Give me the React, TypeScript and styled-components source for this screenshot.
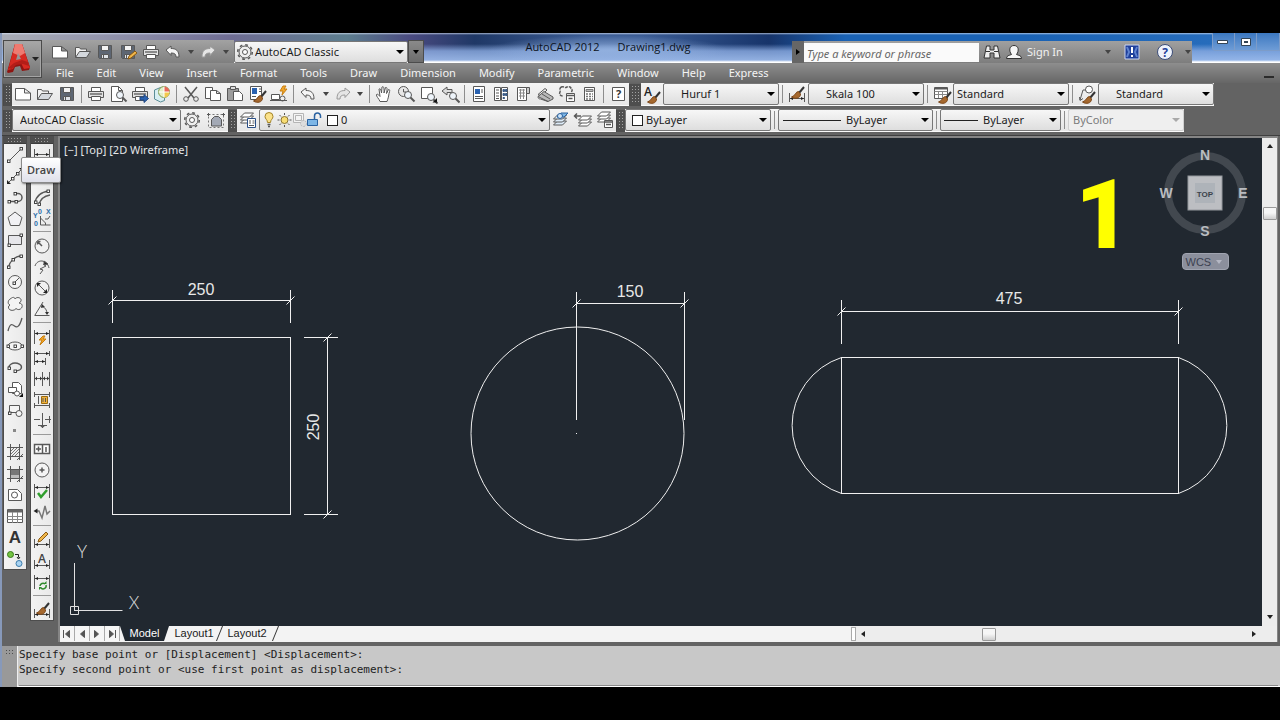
import React from "react";
import styled, { createGlobalStyle, css } from "styled-components";

const UI = `"Noto Sans", "Open Sans", sans-serif`;
const UI_ALT = `"Open Sans", "Noto Sans", sans-serif`;
const ARIAL = `"Liberation Sans", Arial, sans-serif`;

const GlobalStyle = createGlobalStyle`
  * { box-sizing: border-box; }
  body { margin: 0; background: #000; font-family: ${UI}; font-size: 11px; line-height: 14px; color: #1c1c1c; }
  button, input, select { font: inherit; color: inherit; }
`;

const Screen = styled.div`
  min-height: 100vh;
  padding: 33px 0;
  display: flex;
  flex-direction: column;
  background: #000;
`;

const AppWindow = styled.div`
  flex: 1;
  display: flex;
  flex-direction: column;
  border-left: 2px solid #8799ba;
  background: #636363;
`;

/* ---------- title and menu ---------- */

const Header = styled.header`
  display: grid;
  grid-template-columns: 40px 1fr;
  grid-template-rows: 30px 20px;
  background:
    linear-gradient(180deg, rgba(220, 232, 250, 0.7) 0, rgba(220, 232, 250, 0) 2px),
    radial-gradient(ellipse 120px 15px at 606px 17px, rgba(150, 180, 225, 0.85), rgba(150, 180, 225, 0) 100%),
    linear-gradient(180deg, rgba(110, 150, 215, 0) 0, rgba(110, 150, 215, 0) 22%, rgba(140, 172, 226, 0.8) 36%, rgba(158, 188, 236, 0.9) 54%, #fff 58%),
    linear-gradient(90deg, #a9adb6 0, #9294ac 8%, #6e6c93 18%, #5c7d8e 27%, #4a4a80 32%, #1f3866 37%, #3b5c94 46%, #3b5c94 50%, #17346a 60%, #1a62b4 66%, #1a62b4 80%, #2b70be 100%);
`;

const AppButton = styled.button`
  grid-column: 1;
  grid-row: 1 / 3;
  z-index: 1;
  margin: 7px 0 5px 1px;
  padding: 0;
  border: 1px solid #4a4a4a;
  background: linear-gradient(#a8a8a8, #747474);
  box-shadow: inset 0 0 0 1px #a5a5a5;
`;

const TitleRow = styled.div`
  grid-column: 2;
  grid-row: 1;
  display: flex;
  align-items: flex-end;
`;

const QuickAccess = styled.div`
  width: 192px;
  height: 23px;
  padding: 0 2px 0 7px;
  display: flex;
  align-items: center;
  justify-content: space-between;
  background: linear-gradient(#a2a2a2, #7f7f7f);
`;

const MoreButton = styled.button`
  width: 16px;
  height: 23px;
  padding: 0;
  border: 1px solid #4c4c4c;
  background: linear-gradient(#8a8a8a, #6c6c6c);
  display: grid;
  place-items: center;
`;

const Title = styled.h1`
  flex: 1;
  height: 23px;
  margin: 0;
  display: flex;
  justify-content: center;
  gap: 18px;
  font-family: ${UI_ALT};
  font-size: 11px;
  font-weight: 400;
  line-height: 14px;
  color: #0c1220;
`;

const InfoCenter = styled.div`
  width: 400px;
  height: 22px;
  display: flex;
  align-items: center;
  background: linear-gradient(#a0a0a0, #7d7d7d);
  color: #f2f2f2;
`;

const InfoArrow = styled.button`
  width: 12px;
  height: 22px;
  padding: 0;
  border: 0;
  background: #666;
  display: grid;
  place-items: center;
`;

const Search = styled.input`
  width: 175px;
  height: 19px;
  padding: 2px 3px 0;
  border: 0;
  background: #fafafa;
  color: #666;
  font-style: italic;
  &::placeholder { color: #666; opacity: 1; }
`;

const SignIn = styled.button`
  flex: 1;
  height: 20px;
  padding: 0 6px 0 3px;
  border: 0;
  background: none;
  display: flex;
  align-items: center;
  justify-content: space-between;
`;

const WindowButtons = styled.div`
  width: 88px;
  height: 30px;
  padding-left: 20px;
  display: flex;
  align-items: flex-start;
`;

const WindowButton = styled.button`
  width: 28px;
  height: 18px;
  padding: 0;
  border: 1px solid #7d9cc8;
  border-top: 0;
  border-left-width: 0;
  background: linear-gradient(#3c78c0, #6e9cd6);
  display: grid;
  place-items: center;
  &:first-child { border-left-width: 1px; border-bottom-left-radius: 4px; }
`;

const MenuBar = styled.nav`
  grid-column: 1 / 3;
  grid-row: 2;
  padding: 0 6px 0 54px;
  display: flex;
  align-items: center;
  gap: 23px;
  background: linear-gradient(#8e8e8e, #666);
`;

const MenuItem = styled.button`
  padding: 0;
  border: 0;
  background: none;
  color: #f4f4f4;
  line-height: 18px;
`;

const MdiMinimize = styled.button`
  width: 10px;
  height: 10px;
  margin-left: auto;
  padding: 0;
  border: 0;
  border-bottom: 2px solid #2b2b2b;
  background: none;
`;

/* ---------- toolbars ---------- */

const ToolbarRow = styled.div`
  padding: 0 0 3px 1px;
  display: flex;
  align-items: center;
`;

const Grip = styled.span<{ $w: number }>`
  flex: none;
  width: ${(p) => p.$w}px;
  height: 22px;
  border-left: 1px solid #4a4a4a;
  background:
    radial-gradient(#a2a2a2 1px, transparent 1px) 1px 1px / 3px 3px,
    #4e4e4e;
  background-clip: content-box, border-box;
  padding: 2px 2px;
`;

const Panel = styled.div<{ $w?: number }>`
  ${(p) => p.$w && css`width: ${p.$w}px;`}
  height: 23px;
  display: flex;
  align-items: center;
  justify-content: space-between;
  background: linear-gradient(#f4f4f4, #e6e6e6);
  border-bottom: 1px solid #fafafa;
`;

const ToolButton = styled.button<{ $w?: number }>`
  flex: none;
  width: ${(p) => p.$w ?? 22}px;
  height: 21px;
  padding: 0;
  border: 0;
  background: none;
  display: grid;
  place-items: center;
`;

const Divider = styled.span`
  flex: none;
  width: 1px;
  height: 18px;
  margin: 0 3px;
  background: #8d8d8d;
`;

const ComboBox = styled.label<{ $w: number; $pad: number; $off?: boolean }>`
  position: relative;
  flex: none;
  width: ${(p) => p.$w}px;
  height: 22px;
  padding-left: ${(p) => p.$pad}px;
  display: flex;
  align-items: center;
  border: 1px solid ${(p) => (p.$off ? "#d0d0d0" : "#777")};
  border-radius: 2px;
  background: ${(p) => (p.$off ? "#efefef" : "linear-gradient(#f7f7f7, #dedede)")};
  color: ${(p) => (p.$off ? "#7b7b7b" : "#1c1c1c")};
  &::after {
    content: "";
    position: absolute;
    right: 3px;
    top: 8px;
    border: 4px solid transparent;
    border-top-color: ${(p) => (p.$off ? "#a9a9a9" : "#000")};
    border-bottom-width: 0;
    pointer-events: none;
  }
`;

const Select = styled.select`
  flex: 1;
  min-width: 0;
  height: 100%;
  padding: 0;
  border: 0;
  outline: 0;
  appearance: none;
  background: none;
  color: inherit;
  opacity: 1;
`;

const Swatch = styled.span`
  width: 11px;
  height: 11px;
  margin: 0 3px 0 2px;
  border: 1px solid #222;
  background: #fff;
`;

const LineSample = styled.span<{ $w: number }>`
  width: ${(p) => p.$w}px;
  height: 1px;
  margin-right: 5px;
  background: #222;
`;

/* ---------- work area ---------- */

const WorkArea = styled.div`
  flex: 1;
  display: flex;
  align-items: stretch;
  padding-left: 1px;
  border-top: 1px solid #3f3f3f;
`;

const SideBar = styled.div<{ $gap: number; $h: number }>`
  position: relative;
  flex: none;
  align-self: flex-start;
  width: 24px;
  min-height: ${(p) => p.$h}px;
  margin-right: ${(p) => p.$gap}px;
  display: flex;
  flex-direction: column;
  align-items: center;
  justify-content: space-between;
  border: 1px solid #4d4d4d;
  border-top: 0;
  background: linear-gradient(90deg, #f3f3f3, #e9e9e9);
`;

const SideGrip = styled.span`
  width: 100%;
  height: 8px;
  border-bottom: 1px solid #3c3c3c;
  background:
    radial-gradient(#a0a0a0 1px, transparent 1px) 3px 1px / 3px 3px,
    #4e4e4e;
  background-clip: content-box, border-box;
  padding: 1px 3px;
`;

const SideDivider = styled.span`
  width: 18px;
  height: 1px;
  margin: 3px 0;
  background: #9a9a9a;
`;

const Tooltip = styled.span`
  position: absolute;
  left: 17px;
  top: 21px;
  z-index: 3;
  padding: 5px 5px;
  border: 1px solid #8a8a8a;
  border-radius: 2px;
  background: linear-gradient(#fff, #dfe0ea);
  box-shadow: 1px 1px 2px rgba(0, 0, 0, 0.5);
  color: #444;
  font-family: ${UI_ALT};
  font-weight: 600;
`;

const DocumentPane = styled.main`
  flex: 1;
  min-width: 0;
  display: flex;
  flex-direction: column;
  border: 2px solid #858585;
  border-right-width: 1px;
  border-bottom: 0;
  margin-right: 2px;
`;

const Viewport = styled.div`
  flex: 1;
  display: flex;
`;

const Canvas = styled.section`
  position: relative;
  flex: 1;
  min-width: 0;
  min-height: 480px;
  overflow: hidden;
  background: #212830;
`;

const Drawing = styled.svg`
  position: absolute;
  inset: 0;
  width: 100%;
  height: 100%;
  fill: none;
  stroke: #f0f0f0;
  text { fill: #e8e8e8; stroke: none; font: 16px ${ARIAL}; }
`;

const BigNumber = styled.text`
  && {
    font: 900 96px Roboto, ${ARIAL};
    fill: #ffff00;
  }
`;

const ViewLabels = styled.div`
  position: absolute;
  left: 4px;
  top: 5px;
  color: #e4e6e8;
`;

const ViewCube = styled.div`
  position: absolute;
  top: 8px;
  right: 11px;
  display: flex;
  flex-direction: column;
  align-items: center;
  gap: 13px;
`;

const WcsButton = styled.button`
  width: 47px;
  height: 17px;
  padding: 0 5px 0 3px;
  border: 1px solid #a0a4b0;
  border-radius: 4px;
  background: #8b8f9c;
  color: #3b4150;
  font-family: ${ARIAL};
  display: flex;
  align-items: center;
  justify-content: space-between;
  line-height: 14px;
`;

const UcsIcon = styled.svg`
  position: absolute;
  left: 8px;
  bottom: 8px;
  fill: none;
  stroke: #e0e0e0;
`;

const VScroll = styled.div`
  flex: none;
  width: 15px;
  padding: 1px 1px 2px;
  display: flex;
  flex-direction: column;
  align-items: center;
  background: #ececec;
`;

const HScroll = styled.div`
  width: 35%;
  padding-right: 16px;
  display: flex;
  align-items: center;
  background: #ededed;
`;

const ScrollArrow = styled.button`
  flex: none;
  width: 14px;
  height: 14px;
  padding: 0;
  border: 0;
  background: none;
  display: grid;
  place-items: center;
`;

const Thumb = styled.span`
  flex: none;
  width: 14px;
  height: 13px;
  border: 1px solid #999;
  border-radius: 1px;
  background: linear-gradient(#f6f6f6 45%, #cfcfcf);
`;

const Spacer = styled.span<{ $grow: number }>`
  flex: ${(p) => p.$grow} 1 0;
`;

const SplitHandle = styled.span`
  width: 5px;
  height: 14px;
  border: 1px solid #aaa;
  background: #fff;
`;

const TabStrip = styled.div`
  height: 16px;
  display: flex;
  justify-content: space-between;
  background: #f3f3f3;
`;

const TabGroup = styled.div`
  display: flex;
  font-family: ${ARIAL};
`;

const TabNav = styled.button`
  width: 15px;
  height: 15px;
  padding: 0;
  border: 0;
  border-right: 1px solid #aaa;
  background: #f6f6f6;
  display: grid;
  place-items: center;
`;

const Tab = styled.button<{ $w: number; $on?: boolean }>`
  position: relative;
  width: ${(p) => p.$w}px;
  height: 15px;
  padding: 0;
  border: 0;
  background: ${(p) => (p.$on ? "#212830" : "#f3f3f3")};
  clip-path: ${(p) => (p.$on ? "polygon(0 0, 100% 0, calc(100% - 5px) 100%, 5px 100%)" : "none")};
  color: ${(p) => (p.$on ? "#fff" : "#1a1a1a")};
  line-height: 15px;
  &::after {
    content: "";
    display: ${(p) => (p.$on ? "none" : "block")};
    position: absolute;
    z-index: 1;
    right: -1px;
    top: 0;
    height: 15px;
    border-right: 1px solid #333;
    transform: skewX(-22deg);
  }
`;

/* ---------- command line ---------- */

const CommandPane = styled.footer`
  margin-top: 4px;
  padding-left: 1px;
  display: flex;
  background: #999;
`;

const CommandGrip = styled.span`
  flex: none;
  width: 14px;
  height: 8px;
  padding: 3px 2px 0;
  background: radial-gradient(#4d4d4d 1px, transparent 1px) 0 0 / 3px 3px content-box;
`;

const CommandText = styled.div`
  flex: 1;
  padding: 1px 2px 0 1px;
  border-left: 1px solid #eee;
  border-bottom: 1px solid #fff;
  background: #c8c8c8;
  font: 11px/15px "DejaVu Sans Mono", monospace;
  color: #222;
`;

const CommandInput = styled.input`
  display: block;
  width: 100%;
  height: 9px;
  padding: 0;
  border: 0;
  border-bottom: 1px solid #8a8a8a;
  outline: 0;
  background: none;
`;

/* ---------- icon artwork (20 x 20 grid) ---------- */

const page = <path d="M2.500 4.500h9l6 4.500v7h-15zM11.500 4.500v4.500h6" fill="#fff" />;
const floppy = (
  <>
    <path d="M3.500 3.500h13v13h-12l-1-1z" fill="#5d6673" />
    <path d="M6.500 3.500h7v5h-7z" fill="#f3f3f3" />
    <path d="M6.500 12.500h7v4h-7z" fill="#dfe3e8" />
    <path d="M8.500 13v3" />
  </>
);
const folder = (
  <>
    <path d="M2.500 15.500v-10h4l1 1.500h6v3" fill="#f1f1f1" />
    <path d="M2.500 15.500l4-6h11l-4 6z" fill="#d5d9de" />
  </>
);
const printer = (
  <>
    <path d="M5.500 8V3.500h9V8" fill="#fff" />
    <path d="M2.500 7.500h15v6h-15z" fill="#e2e2e2" />
    <path d="M5.500 12.500h9v4h-9z" fill="#fff" />
    <path d="M4 10h12" stroke="#333" />
  </>
);
const lens = (
  <>
    <circle cx="12" cy="11" r="3.500" fill="#eef4fa" />
    <path d="M14.500 13.500l4 4" strokeWidth="2" />
  </>
);
const undo = <path d="M3 8l5-4v2.500c5 0 8 2 8 8.500h-3c0-3-1.500-4-5-4v2.500z" fill="#f5f5f5" />;
const redo = <path d="M17 8l-5-4v2.500c-5 0-8 2-8 8.500h3c0-3 1.500-4 5-4v2.500z" fill="#e5e5e5" stroke="#999" />;
const brush = (
  <>
    <path d="M18 4l-5 6" stroke="#333" strokeWidth="2" />
    <path d="M12.500 8.500c-3 0-3 4.500-7 5.500 3.500 2.500 9 1.500 9-3z" fill="#a5682e" stroke="#7b4516" />
  </>
);
const gear = (
  <>
    <circle cx="10" cy="10" r="6" fill="#eee" />
    <circle cx="10" cy="10" r="7.300" strokeDasharray="2.800 2.930" strokeWidth="1.500" />
    <circle cx="10" cy="10" r="2.500" fill="#fff" />
  </>
);
const layers = (y: number, fill = "#fff") => (
  <>
    {[y + 6, y + 3, y].map((t) => (
      <path key={t} d={`M2.500 ${t + 4}l4-4h9l-4 4z`} fill={fill} />
    ))}
  </>
);
const dimLine = (
  <>
    <path d="M2.500 4v12M17.500 4v12M3 9.500h14" />
    <path d="M3 9.500l3-1.500v3zM17 9.500l-3-1.500v3z" fill="#222" stroke="none" />
  </>
);
const dimTop = (
  <>
    <path d="M2.500 3v14M17.500 3v14M3 6.500h14" />
    <path d="M3 6.500l3-1.500v3zM17 6.500l-3-1.500v3z" fill="#222" stroke="none" />
  </>
);
const dimLow = (
  <>
    <path d="M2.500 9v9M17.500 9v9M3 14.500h14" />
    <path d="M3 14.500l3-1.500v3zM17 14.500l-3-1.500v3z" fill="#222" stroke="none" />
  </>
);
const node = (x: number, y: number) => <rect key={`${x}-${y}`} x={x - 1} y={y - 1} width="2.500" height="2.500" fill="#fff" stroke="#333" strokeWidth="0.900" />;
const frame = <path d="M5.500 2v16M14.500 2v16M2 5.500h16M2 14.500h16" />;

const art: Record<string, React.ReactNode> = {
  page,
  floppy,
  folder,
  printer,
  undo,
  redo,
  gear,
  saveAs: (<>{floppy}<path d="M10 17l1-3 6-5 2 2-6 5z" fill="#f0b64a" stroke="#8a5a14" /></>),
  preview: (<><path d="M3.500 2.500h7l4 4v11h-11z" fill="#fff" /><path d="M10.500 2.500v4h4" />{lens}</>),
  publish: (<>{printer}<path d="M10 13h4v-2.500l4.500 4-4.500 4V16h-4z" fill="#2a62b0" stroke="#1c4480" /></>),
  globe: (
    <>
      <path d="M2.500 6l6-2.500 4 2v11l-4 1.500-6-3z" fill="#d8eef2" stroke="#5b8d96" />
      <circle cx="12" cy="8" r="5.500" fill="#e3efc9" stroke="#7d9b4e" />
      <path d="M12 2.500a5.500 5.500 0 0 1 5.500 5.500h-5.500z" fill="#e8695a" stroke="none" />
      <path d="M12 8h5.500a5.500 5.500 0 0 1-5.500 5.500z" fill="#f2c84b" stroke="none" />
      <path d="M6.500 8h11M12 2.500v11" stroke="#fff" />
    </>
  ),
  cut: (<><path d="M4 3l9 11M16 3L7 14" strokeWidth="1.500" /><circle cx="5" cy="15" r="2.300" /><circle cx="15" cy="15" r="2.300" /></>),
  copy: (<><path d="M2.500 3.500h7v11h-7z" fill="#fff" /><path d="M7.500 6.500h6l4 3v7h-10zM13.500 6.500v3h4" fill="#fff" /></>),
  paste: (<><path d="M2.500 4.500h11v12h-11z" fill="#9d9d9d" /><path d="M5.500 2.500h5v3h-5z" fill="#ddd" /><path d="M8.500 7.500h6l3 3v6h-9z" fill="#fff" /></>),
  match: (<><path d="M3.500 2.500h11v13h-11z" fill="#fff" /><path d="M5 4h5v6H5z" fill="#2a62b0" stroke="none" /><path d="M12 5h2M12 7.500h2M5 12.500h4" /><g transform="translate(1 3)">{brush}</g></>),
  block: (<><path d="M2.500 10.500h8v5h-8z" fill="#fff" /><circle cx="13.500" cy="14.500" r="2.500" fill="#eee" /><path d="M1 16.500h17" /><path d="M14 2l-3 5h3l-1 4 5-6h-3l2-3z" fill="#f2a72b" stroke="#c77f12" /></>),
  pan: (<path d="M6 17.500c-1-3-4-5-3.500-7 1.500-1 2.500 1 3.500 2L5 5c1.500-1 2 1 2.500 4L8 3c1.500-1 2.200 0 2 6l1.500-5.500c1.500-.5 2 .5 1 6l2-4c1.500 0 1.500 1 .5 4-.5 4-1 5-2 8z" fill="#fff" />),
  zoomRt: (<><circle cx="7.500" cy="7.500" r="5" fill="#e7e7e7" /><path d="M7.500 5v3h3" />{lens}</>),
  zoomWin: (<><path d="M3.500 3.500h11v11h-11z" fill="#fff" /><g transform="translate(1 2)">{lens}</g><path d="M19 14v4.500h-4.500z" fill="#111" stroke="none" /></>),
  zoomPrev: (<><path d="M2 7l5-4v2.500h5v3H7V11z" fill="#ddd" /><g transform="translate(1 1)">{lens}</g></>),
  props: (<><path d="M4.500 2.500h11v15h-11z" fill="#fff" /><path d="M6 5h5v5H6z" fill="#2a62b0" stroke="none" /><path d="M12 6h2M12 8h2M6 12.500h8M6 14.500h8" /></>),
  center: (<><path d="M3.500 3.500h6v13h-6zM10.500 3.500h6v13h-6z" fill="#fff" /><path d="M5 6h3M5 9h3M5 12h3M5 14.500h3" /><path d="M12 5.500h1.500v2H12zM14.500 5.500H16v2h-1.500zM12 9.500h1.500v2H12zM14.500 9.500H16v2h-1.500zM12 13.500h1.500v1H12z" fill="#2a62b0" stroke="#3c5a80" /></>),
  palettes: (<><path d="M4.500 3.500h9v13h-9z" fill="#fff" /><path d="M13.500 3.500h3v6h-3z" fill="#ccc" /><path d="M6 6h6M6 9h6M6 12h6M7.500 5v10M10.500 5v10" stroke="#888" /></>),
  sheet: (<><path d="M3 10.500l7-6 2 1.500-6 6z" fill="#eee" /><path d="M3 12.500l6-5 9 5.500v2l-5 2.500z" fill="#b9b9b9" /><path d="M3 12.500c0 2 1 2.500 2.500 2.500l7.500 2.500M7 10l8 5" /></>),
  markup: (<><path d="M4 3c3-1 4 1 5 .5 3-1.500 5-.5 5 1 2 1 1 3 0 4M4 3c-2 2-.5 3-1 5-1 2 0 4 3 4" strokeDasharray="3 1" strokeWidth="1.500" /><path d="M9.500 9.500h8v8h-8z" fill="#fff" /><path d="M9.500 11.500h8M11.500 14.500h4" strokeWidth="1.500" /></>),
  calc: (<><path d="M5.500 3.500h10v13h-10z" fill="#fff" /><path d="M7 5.500h7v2H7z" fill="#bbb" stroke="#777" /><path d="M7 10h7M7 12.500h7M7 15h7" strokeDasharray="2 1" strokeWidth="1.500" stroke="#777" /></>),
  help: (<><path d="M4.500 3.500h12v13h-12z" fill="#fff" /><text x="10.500" y="14" textAnchor="middle" fontSize="11" fontWeight="700" fill="#333" stroke="none" fontFamily="Open Sans">?</text></>),
  textStyle: (<><text x="2" y="12" fontSize="12" fontWeight="600" fill="#222" stroke="none" fontFamily="Open Sans">A</text><g transform="translate(0 4)">{brush}</g></>),
  dimStyle: (<>{dimLow}<g transform="translate(-1 -1)">{brush}</g></>),
  tableStyle: (<><path d="M2.500 3.500h13v11h-13z" fill="#fff" /><path d="M2.500 7.500h13M2.500 10.500h13M6.500 7v7M10.500 7v7" stroke="#888" /><path d="M3 4.500h12" strokeWidth="2" /><g transform="translate(1 4)">{brush}</g></>),
  leaderStyle: (<><circle cx="12" cy="5.500" r="3.500" fill="#fff" /><path d="M3 16L6 6h3M2.500 13l.5 3.500 3-2" /><g transform="translate(0 4)">{brush}</g></>),
  wsSave: (<><path d="M5.500 9.500l3-3h4l3 3v6.500h-10z" fill="#a3a9b5" /><path d="M2.500 4.500h15v13h-15z" strokeDasharray="2 2" stroke="#777" /><path d="M1 4.500h3M2.500 3v3M16 4.500h3M17.500 3v3" /></>),
  layerProps: (<>{layers(3)}<path d="M9.500 8.500h8v9h-8z" fill="#fff" stroke="#2a4f86" /><path d="M11 11h2M14.500 11h2M11 13h2M14.500 13h2M11 15.500h5" /></>),
  layerCurrent: (<>{layers(5, "#dcebf8")}<path d="M6 7l4-4h7l-4 4z" fill="#7db6e6" stroke="#2a62a0" /><circle cx="9" cy="6" r="2.500" fill="#cfe4f7" stroke="#2a62a0" /></>),
  layerPrev: (<><g transform="translate(3 3)">{layers(3)}</g><path d="M8 6H2M4 3.500L1.500 6 4 8.500" strokeWidth="1.500" /></>),
  layerState: (<>{layers(2)}<path d="M9.500 10.500h8v7h-8z" fill="#fff" /><path d="M9.500 12h8M11 14.500h5" strokeWidth="1.500" /></>),
  bulb: (<><path d="M7.500 12.500c0-3-2.500-3.500-2.500-6a4 4 0 0 1 8 0c0 2.500-2.500 3-2.500 6z" fill="#fbe28b" stroke="#a38325" /><path d="M7.500 14.500h3M8 16.500h2" strokeWidth="1.500" /></>),
  sun: (<><circle cx="9.500" cy="10" r="3.500" fill="#f8dd74" stroke="#8a7430" /><path d="M9.500 3v2M9.500 15v2M2.500 10h2M14.500 10h2M4.500 5l1.500 1.500M13 13.500l1.500 1.500M4.500 15L6 13.500M13 6.500L14.500 5" /></>),
  vpFreeze: (<g stroke="#b5b5b5"><path d="M3.500 3.500h10v9h-10z" fill="#f4f4f4" /><path d="M5.500 5.500h6v5h-6z" /><circle cx="13.500" cy="13.500" r="3" fill="#ddd" strokeDasharray="2 1" /></g>),
  lock: (<><path d="M2.500 9.500h10v6h-10z" fill="#7db6e6" stroke="#2a62a0" /><path d="M9.500 9V6a3 3 0 0 1 6 0v2" stroke="#2a62a0" strokeWidth="1.500" /></>),

  line: (<><path d="M3.500 16.500L16.500 3.500" />{node(3.5, 16)}{node(16, 3.5)}</>),
  xline: (<><path d="M3 17L17 3" />{node(7.5, 12.5)}{node(12.5, 7.5)}<path d="M2 18v-4l4 4zM18 2v4l-4-4z" fill="#222" stroke="none" /></>),
  pline: (<><path d="M4 14.500h8M10 6.500h3a4 4 0 0 1 0 8" strokeWidth="1.500" />{node(4, 14.5)}{node(10, 6.5)}{node(11, 14.5)}</>),
  polygon: (<path d="M10 3l7 5.500-2.500 8h-9L3 8.500z" fill="#f1f1f4" />),
  rect: (<><path d="M3.500 5.500h13v9h-13z" fill="#e6e6ea" />{node(4, 15)}{node(16, 5)}</>),
  arc: (<><path d="M3.500 16c1-5 6-11 13-11" strokeWidth="1.300" />{node(3.5, 16)}{node(8, 8.5)}{node(16, 5)}</>),
  circle: (<><circle cx="10" cy="10" r="6.500" fill="#f4f4f4" /><path d="M9 11l5-5" />{node(9, 11)}</>),
  cloud: (<path d="M6 4.500c2-2 4-1 4 .5 1-2 5-2 6 .5.500 2-1 3-2 3.500 3 0 4 3 2.500 5s-4 2-5.500.500c-1 2-5 2.500-6.500 1S3 12 5 11C2 10 3 5.500 6 4.500z" fill="#f4f4f4" />),
  spline: (<path d="M3 16c2-8 4-7 6.500-5s5 1 7.500-8" strokeWidth="1.300" />),
  ellipse: (<><ellipse cx="10" cy="10" rx="7" ry="4" fill="#f4f4f4" />{node(3, 10)}{node(17, 10)}{node(10, 10)}</>),
  earc: (<><path d="M4 10c0-2 3-4 6-4s6.500 1.500 6.500 4-3 4-6.500 4" strokeWidth="1.500" />{node(4, 11)}{node(10, 14)}</>),
  insert: (<><path d="M7.500 3.500h6l3 3v8h-9z" fill="#fff" /><path d="M3.500 8.500h8v5h-8z" fill="#fff" /><circle cx="12" cy="14.500" r="2.500" fill="#fff" /><path d="M18 14v4h-4z" fill="#111" stroke="none" /></>),
  makeBlock: (<><path d="M4.500 5.500h10v7h-10z" fill="#f4f4f4" /><circle cx="14" cy="13.500" r="3" fill="#f4f4f4" />{node(4.5, 13)}</>),
  point: (<rect x="8.500" y="8.500" width="2" height="2" fill="#888" stroke="#888" />),
  hatch: (<>{frame}<path d="M6 9l3-3M6 12l6-6M7 14l7-7M10 14l4-4" stroke="#777" /><path d="M12 18l6-6" /></>),
  gradient: (<><path d="M6 6h8v8H6z" fill="#777" stroke="none" /><path d="M6 11h8v3H6z" fill="#bbb" stroke="none" />{frame}<path d="M12 18l6-6" /></>),
  region: (<><path d="M3.500 4.500h9l4 4v7h-13z" fill="#fff" /><circle cx="9.500" cy="10" r="3" /></>),
  table: (<><path d="M2.500 3.500h15v13h-15z" fill="#fff" /><path d="M3 5h14" strokeWidth="3" stroke="#666" /><path d="M2.500 10.500h15M2.500 13.500h15M7.500 6v11M12.500 6v11" stroke="#888" /></>),
  mtext: (<text x="10" y="16" textAnchor="middle" fontSize="17" fontWeight="700" fill="#333" stroke="none" fontFamily="Liberation Sans">A</text>),
  addSel: (<><circle cx="5.500" cy="5.500" r="3" fill="#74c442" stroke="#397a18" /><circle cx="14" cy="14.500" r="3" fill="#a9d3f2" stroke="#3c7cab" /><path d="M10 5.500h3.500v3M12 8l1.500 2L15 8" stroke="#222" /></>),

  dimLinear: dimLine,
  dimArc: (<><path d="M3 16C4 9 9 5 17 4M7 18c1-5 5-9 11-10" strokeWidth="1.300" />{node(3.5, 15)}{node(16, 4)}{node(7, 17)}</>),
  dimOrd: (<><path d="M8.500 8v9h10M8.500 10l5 5v2M13 11h3l2-3" /><g fill="#2c6ea8" stroke="none" fontSize="7" fontWeight="700" fontFamily="Liberation Sans"><text x="1" y="10">Y</text><text x="6" y="6">0</text><text x="14" y="6">X</text><text x="2" y="18">0</text></g></>),
  dimRad: (<><circle cx="10" cy="10" r="7" fill="#f1f1f1" /><path d="M10 10L6 6M5.500 5.500h3M5.500 5.500v3" strokeWidth="1.500" /></>),
  dimJog: (<><path d="M3 9c2-7 12-7 14 2M11 7l3 2-6 3 3 1-3 4" /><path d="M12 4l4 3-4 1z" fill="#222" /></>),
  dimDia: (<><circle cx="10" cy="10" r="7" fill="#f1f1f1" /><path d="M6 6l8 8" /><path d="M5 5h4l-4 4zM15 15h-4l4-4z" fill="#222" stroke="none" /></>),
  dimAng: (<><path d="M2.500 16.500h15M3 16L11 3M9 7c4 1 6 4 6 8" /><path d="M13 13h4l-2 3zM10 5l3 3-4 1z" fill="#333" stroke="none" /></>),
  dimQuick: (<>{dimTop}<path d="M11 9l-4 4h3l-2 5 6-6h-3l2-3z" fill="#f5a623" stroke="#c77f12" /></>),
  dimBase: (<><path d="M2.500 3v14M3 5.500h14M17.500 3v5M3 13.500h10M13.500 10v7" /><path d="M3 5.500l3-1.500v3zM17 5.500l-3-1.500v3zM3 13.500l3-1.500v3zM13 13.500l-3-1.500v3z" fill="#222" stroke="none" /></>),
  dimCont: (<><path d="M2.500 3v14M10.500 3v14M17.500 3v14M3 9.500h14" /><path d="M3 9.500l2-2v4zM10 9.500l-2-2v4zM11 9.500l2-2v4zM17 9.500l-2-2v4z" fill="#333" stroke="none" /></>),
  dimSpace: (<><path d="M2.500 2v5M17.500 2v5M3 4.500h14M2.500 13v5M17.500 13v5M3 15.500h14M6.500 6v8" /><path d="M9.500 6.500h6v7h-6z" fill="#f2b33c" stroke="#9a6a10" /><path d="M11 8v4M13.500 8v4" /></>),
  dimBreak: (<><path d="M10.500 2v15M2 8.500h6M13 8.500h6M6 14.500h9M17.500 5v7" /><path d="M7 14h7l-3.500 3z" fill="#555" stroke="none" /></>),
  dimTol: (<><path d="M2.500 5.500h15v9h-15zM10.500 5.500v9" fill="#fff" strokeWidth="1.500" /><path d="M4 10h5M6.500 7.500v5M14 8v5" strokeWidth="1.500" /></>),
  dimCenter: (<><circle cx="10" cy="10" r="7" fill="#f4f4f4" /><path d="M7.500 10h5M10 7.500v5" strokeWidth="1.500" /></>),
  dimInsp: (<>{dimTop}<path d="M6 12l3 4 6-7" stroke="#2f9e2c" strokeWidth="2.500" /></>),
  dimJogLine: (<><path d="M3 9h4l3 7 3-12 2 8 3-3" strokeWidth="1.500" stroke="#777" /><path d="M1.500 9l4-2.500v5z" fill="#222" stroke="none" /></>),
  dimEdit: (<>{dimLow}<path d="M6 12l1-3 7-7 2 2-7 7z" fill="#f0b64a" stroke="#8a5a14" /></>),
  dimText: (<>{dimLow}<text x="10" y="12" textAnchor="middle" fontSize="12" fontWeight="600" fill="#444" stroke="none" fontFamily="Open Sans">A</text></>),
  dimUpd: (<>{dimTop}<path d="M8 14a3 3 0 0 1 5-2M14 13a3 3 0 0 1-5 3" stroke="#2f8a2c" strokeWidth="1.500" /><path d="M11.500 12h3v-3zM10 15H7v3z" fill="#2f8a2c" stroke="none" /></>),

  binoculars: (<><path d="M4.500 4h3.500v4h4V4h3.500l2.500 12h-6v-5H8v5H2z" fill="#eee" stroke="#333" /><path d="M4 9.500h4M12 9.500h4" stroke="#333" /></>),
  person: (<path d="M2.500 16.500c0-3 2.500-3 5-4-3-4-2-9 2.500-9s5.500 5 2.500 9c2.500 1 5 1 5 4z" fill="#f6f6f6" stroke="#333" />),
  exchange: (<><path d="M3 3h14v14H3z" fill="#1f3f9a" stroke="#c9d4f2" /><path d="M5 5l2 5-2 5M15 5l-2 5 2 5" stroke="#5f83d0" strokeWidth="2" /><path d="M10 5v6M10 13v2" stroke="#fff" strokeWidth="2" /></>),
  helpRound: (<><circle cx="10" cy="10" r="7.500" fill="#eef2fb" stroke="#3c4d78" /><text x="10" y="14.500" textAnchor="middle" fontSize="12" fontWeight="700" fill="#1f3f9a" stroke="none" fontFamily="Open Sans">?</text></>),
};

const Glyph = styled.svg`
  display: block;
  fill: none;
  stroke: #585858;
  stroke-width: 1px;
`;

const Icon = ({ name }: { name: string }) => (
  <Glyph width="20" height="20" viewBox="0 0 20 20" aria-hidden="true">
    {art[name]}
  </Glyph>
);

const CaretSvg = styled.svg<{ $color: string }>`
  display: block;
  flex: none;
  fill: ${(p) => p.$color};
`;
const caretPaths = { down: "M1 2h6l-3 4z", up: "M1 6h6L4 2z", left: "M6 1v6L2 4z", right: "M2 1v6l4-3z" };
const Caret = ({ dir = "down", color = "#222" }: { dir?: keyof typeof caretPaths; color?: string }) => (
  <CaretSvg $color={color} width="8" height="8" viewBox="0 0 8 8" aria-hidden="true">
    <path d={caretPaths[dir]} />
  </CaretSvg>
);

/* ---------- data ---------- */

const menus = ["File", "Edit", "View", "Insert", "Format", "Tools", "Draw", "Dimension", "Modify", "Parametric", "Window", "Help", "Express"];

const quickTools = ["page", "folder", "floppy", "saveAs", "printer", "undo", ">", "redo", ">"];

const standardTools = [
  "page", "folder", "floppy", "|",
  "printer", "preview", "publish", "globe", "|",
  "cut", "copy", "paste", "match", "block", "|",
  "undo", ">", "redo", ">", "|",
  "pan", "zoomRt", "zoomWin", "zoomPrev", "|",
  "props", "center", "palettes", "sheet", "markup", "calc", "|",
  "help",
];

const drawTools = [
  "line", "xline", "pline", "polygon", "rect", "arc", "circle", "cloud", "spline", "ellipse",
  "earc", "insert", "makeBlock", "point", "hatch", "gradient", "region", "table", "mtext", "addSel",
];

const dimensionTools = [
  "dimLinear", "dimLinear", "dimArc", "dimOrd", "|",
  "dimRad", "dimJog", "dimDia", "dimAng", "|",
  "dimQuick", "dimBase", "dimCont", "dimSpace", "dimBreak", "|",
  "dimTol", "dimCenter", "dimInsp", "dimJogLine", "|",
  "dimEdit", "dimText", "dimUpd", "|",
  "dimStyle",
];

const styleSets = [
  { icon: "textStyle", label: "Text style", value: "Huruf 1", pad: 17 },
  { icon: "dimStyle", label: "Dimension style", value: "Skala 100", pad: 17 },
  { icon: "tableStyle", label: "Table style", value: "Standard", pad: 3 },
  { icon: "leaderStyle", label: "Multileader style", value: "Standard", pad: 17 },
];

/* ---------- pieces ---------- */

const Tools = ({ items }: { items: string[] }) => (
  <>
    {items.map((t, i) =>
      t === "|" ? (
        <Divider key={i} />
      ) : t === ">" ? (
        <ToolButton key={i} $w={12} aria-label="More">
          <Caret color="#444" />
        </ToolButton>
      ) : (
        <ToolButton key={i} aria-label={t}>
          <Icon name={t} />
        </ToolButton>
      )
    )}
  </>
);

const SideTools = ({ items }: { items: string[] }) => (
  <>
    {items.map((t, i) =>
      t === "|" ? (
        <SideDivider key={i} />
      ) : (
        <ToolButton key={i} aria-label={t}>
          <Icon name={t} />
        </ToolButton>
      )
    )}
  </>
);

type ComboProps = { w: number; pad: number; label: string; value: string; off?: boolean; children?: React.ReactNode };
const Combo = ({ w, pad, label, value, off, children }: ComboProps) => (
  <ComboBox $w={w} $pad={pad} $off={off}>
    {children}
    <Select aria-label={label} disabled={off} defaultValue={value}>
      <option>{value}</option>
    </Select>
  </ComboBox>
);

const Tick = ({ x, y }: { x: number; y: number }) => <path d={`M${x - 4} ${y + 4}l8-8`} />;

const Model = () => (
  <Drawing aria-label="Drawing1 model space">
    <g shapeRendering="crispEdges">
      <rect x="52.500" y="199.500" width="178" height="177" />
      <path d="M52.500 152v33M230.500 152v33M52.500 162.500h178" />
      <path d="M244 199.500h34M244 376.500h34M267.500 199.500v177" />
      <path d="M516.500 154v128M624.500 154v128M516.500 165.500h108" />
      <path d="M516 295.500h1" />
      <rect x="781.500" y="219.500" width="337" height="136" />
      <path d="M781.500 162v44M1118.500 162v44M781.500 173.500h337" />
    </g>
    <circle cx="517.500" cy="295.500" r="106.500" />
    <path d="M781.500 219.500a71.500 71.500 0 0 0 0 136M1118.500 219.500a72 72 0 0 1 0 136" />
    <Tick x={52.5} y={162.5} />
    <Tick x={230.5} y={162.5} />
    <Tick x={267.5} y={199.5} />
    <Tick x={267.5} y={376.5} />
    <Tick x={516.5} y={165.5} />
    <Tick x={624.5} y={165.5} />
    <Tick x={781.5} y={173.5} />
    <Tick x={1118.5} y={173.5} />
    <g textAnchor="middle">
      <text x="141" y="157">250</text>
      <text transform="translate(259 289) rotate(-90)">250</text>
      <text x="570" y="159">150</text>
      <text x="949" y="166">475</text>
      <BigNumber x="1043" y="110">1</BigNumber>
    </g>
  </Drawing>
);

const Compass = () => (
  <svg width="92" height="94" viewBox="0 0 92 94" aria-label="View cube">
    <circle cx="46" cy="47" r="37" fill="none" stroke="#42484f" strokeWidth="8" />
    <rect x="29" y="30" width="34" height="34" fill="#bcbec2" stroke="#94979c" />
    <rect x="36" y="37" width="20" height="20" fill="#aeb3b9" />
    <g fill="#b9bcc0" fontFamily="Liberation Sans" fontWeight="700" fontSize="14" textAnchor="middle">
      <text x="46" y="14">N</text>
      <text x="84" y="52">E</text>
      <text x="46" y="90">S</text>
      <text x="7" y="52">W</text>
    </g>
    <text x="46" y="51" fill="#3c434c" fontFamily="Liberation Sans" fontWeight="700" fontSize="8" textAnchor="middle">TOP</text>
  </svg>
);

const Logo = () => (
  <svg width="36" height="36" viewBox="0 0 36 36" aria-hidden="true">
    <path d="M2 31L10 3h7l8 23-1 3-7 1-2-5-5 1-2 5-5 1z" fill="#8f1512" />
    <path d="M3 29L10 3h7l8 24-6 1-3-6-6 1-2 5z" fill="#d62a22" />
    <path d="M10 3h7l3 9-5 3-7-3z" fill="#ee7a70" />
    <path d="M11 19l2-7 3 6z" fill="#959595" />
    <path d="M3 27l6-5 8-3 6 2 1 4-6-2-7 1-4 4z" fill="#b31d18" />
    <path d="M27 16h7l-3.500 4z" fill="#222" />
  </svg>
);

export default function App() {
  return (
    <Screen>
      <GlobalStyle />
      <AppWindow>
        <Header>
          <AppButton aria-label="Application menu">
            <Logo />
          </AppButton>
          <TitleRow>
            <QuickAccess>
              <Tools items={quickTools} />
            </QuickAccess>
            <Combo w={174} pad={0} label="Workspace" value="AutoCAD Classic">
              <Icon name="gear" />
            </Combo>
            <MoreButton aria-label="Customize quick access">
              <Caret color="#000" />
            </MoreButton>
            <Title>
              <span>AutoCAD 2012</span>
              <span>Drawing1.dwg</span>
            </Title>
            <InfoCenter>
              <InfoArrow aria-label="Collapse">
                <Caret dir="right" color="#000" />
              </InfoArrow>
              <Search aria-label="Search" placeholder="Type a keyword or phrase" />
              <ToolButton $w={25} aria-label="Find"><Icon name="binoculars" /></ToolButton>
              <Icon name="person" />
              <SignIn>
                Sign In
                <Caret color="#444" />
              </SignIn>
              <ToolButton $w={28} aria-label="Exchange"><Icon name="exchange" /></ToolButton>
              <ToolButton $w={38} aria-label="Help"><Icon name="helpRound" /></ToolButton>
              <Caret color="#444" />
            </InfoCenter>
            <WindowButtons>
              <WindowButton aria-label="Minimize">
                <svg width="12" height="6"><path d="M.5 1.500h10v3H.5z" fill="#fff" stroke="#345" /></svg>
              </WindowButton>
              <WindowButton aria-label="Maximize">
                <svg width="12" height="10"><path d="M1.500 1.500h9v7h-9z" fill="#fff" stroke="#345" /><path d="M4 4h4v2H4z" fill="#345" /></svg>
              </WindowButton>
              <WindowButton aria-label="Close" />
            </WindowButtons>
          </TitleRow>
          <MenuBar>
            {menus.map((m) => (
              <MenuItem key={m}>{m}</MenuItem>
            ))}
            <MdiMinimize aria-label="Minimize drawing" />
          </MenuBar>
        </Header>

        <ToolbarRow>
          <Grip $w={9} />
          <Panel $w={617}>
            <Tools items={standardTools} />
          </Panel>
          <Grip $w={12} />
          <Panel>
            {styleSets.map((s, i) => (
              <React.Fragment key={i}>
                {i > 0 && <Divider />}
                <ToolButton aria-label={s.label}>
                  <Icon name={s.icon} />
                </ToolButton>
                <Combo w={116} pad={s.pad} label={s.label} value={s.value} />
              </React.Fragment>
            ))}
          </Panel>
        </ToolbarRow>

        <ToolbarRow>
          <Grip $w={9} />
          <Panel>
            <Combo w={169} pad={7} label="Workspaces" value="AutoCAD Classic" />
            <ToolButton aria-label="Workspace settings"><Icon name="gear" /></ToolButton>
            <ToolButton $w={25} aria-label="My workspace"><Icon name="wsSave" /></ToolButton>
          </Panel>
          <Grip $w={9} />
          <Panel>
            <ToolButton aria-label="Layer properties"><Icon name="layerProps" /></ToolButton>
            <ComboBox $w={291} $pad={0}>
              <ToolButton $w={15} aria-label="On"><Icon name="bulb" /></ToolButton>
              <ToolButton $w={15} aria-label="Thaw"><Icon name="sun" /></ToolButton>
              <ToolButton $w={15} aria-label="Viewport freeze"><Icon name="vpFreeze" /></ToolButton>
              <ToolButton $w={20} aria-label="Lock"><Icon name="lock" /></ToolButton>
              <Swatch />
              <Select aria-label="Layer" defaultValue="0">
                <option>0</option>
              </Select>
            </ComboBox>
            <ToolButton aria-label="Make current"><Icon name="layerCurrent" /></ToolButton>
            <ToolButton aria-label="Layer previous"><Icon name="layerPrev" /></ToolButton>
            <ToolButton aria-label="Layer states"><Icon name="layerState" /></ToolButton>
          </Panel>
          <Grip $w={9} />
          <Panel>
            <Combo w={146} pad={4} label="Color" value="ByLayer">
              <Swatch />
            </Combo>
            <Divider />
            <Combo w={155} pad={4} label="Linetype" value="ByLayer">
              <LineSample $w={58} />
            </Combo>
            <Divider />
            <Combo w={121} pad={3} label="Lineweight" value="ByLayer">
              <LineSample $w={34} />
            </Combo>
            <Divider />
            <Combo w={116} pad={4} label="Plot style" value="ByColor" off />
          </Panel>
        </ToolbarRow>

        <WorkArea>
          <SideBar $gap={3} $h={434}>
            <SideGrip />
            <SideTools items={drawTools} />
            <Tooltip role="tooltip">Draw</Tooltip>
          </SideBar>
          <SideBar $gap={4} $h={484}>
            <SideGrip />
            <SideTools items={dimensionTools} />
          </SideBar>
          <DocumentPane>
            <Viewport>
              <Canvas>
                <Model />
                <ViewLabels>[−] [Top] [2D Wireframe]</ViewLabels>
                <ViewCube>
                  <Compass />
                  <WcsButton>
                    WCS
                    <Caret color="#b5b8c4" />
                  </WcsButton>
                </ViewCube>
                <UcsIcon width="80" height="80" viewBox="0 -6 80 80" aria-label="UCS icon">
                  <path d="M2.500 62.500h8v8h-8zM6.500 19v48M6.500 66.500h48" />
                  <g fill="#e0e0e0" stroke="none" fontFamily="Lato" fontWeight="300" fontSize="17" textAnchor="middle">
                    <text x="14" y="14">Y</text>
                    <text x="66" y="65">X</text>
                  </g>
                </UcsIcon>
              </Canvas>
              <VScroll>
                <ScrollArrow aria-label="Scroll up"><Caret dir="up" /></ScrollArrow>
                <Spacer $grow={5} />
                <Thumb />
                <Spacer $grow={36} />
                <ScrollArrow aria-label="Scroll down"><Caret /></ScrollArrow>
              </VScroll>
            </Viewport>
            <TabStrip>
              <TabGroup>
                {(["left", "left", "right", "right"] as const).map((d, i) => (
                  <TabNav key={i} aria-label={`Tab ${i}`}>
                    <svg width="10" height="10" viewBox="0 0 10 10" fill="#555" stroke="#555">
                      <path d={d === "left" ? "M7.500 1.500v7L3.500 5z" : "M2.500 1.500v7L6.500 5z"} />
                      {i === 0 && <path d="M1.500 1v8" />}
                      {i === 3 && <path d="M8.500 1v8" />}
                    </svg>
                  </TabNav>
                ))}
                <Tab $w={49} $on>Model</Tab>
                <Tab $w={50}>Layout1</Tab>
                <Tab $w={56}>Layout2</Tab>
              </TabGroup>
              <HScroll>
                <SplitHandle />
                <ScrollArrow aria-label="Scroll left"><Caret dir="left" /></ScrollArrow>
                <Spacer $grow={4} />
                <Thumb />
                <Spacer $grow={9} />
                <ScrollArrow aria-label="Scroll right"><Caret dir="right" /></ScrollArrow>
              </HScroll>
            </TabStrip>
          </DocumentPane>
        </WorkArea>

        <CommandPane>
          <CommandGrip />
          <CommandText>
            <div>Specify base point or [Displacement] &lt;Displacement&gt;:</div>
            <div>Specify second point or &lt;use first point as displacement&gt;:</div>
            <CommandInput aria-label="Command" />
          </CommandText>
        </CommandPane>
      </AppWindow>
    </Screen>
  );
}
